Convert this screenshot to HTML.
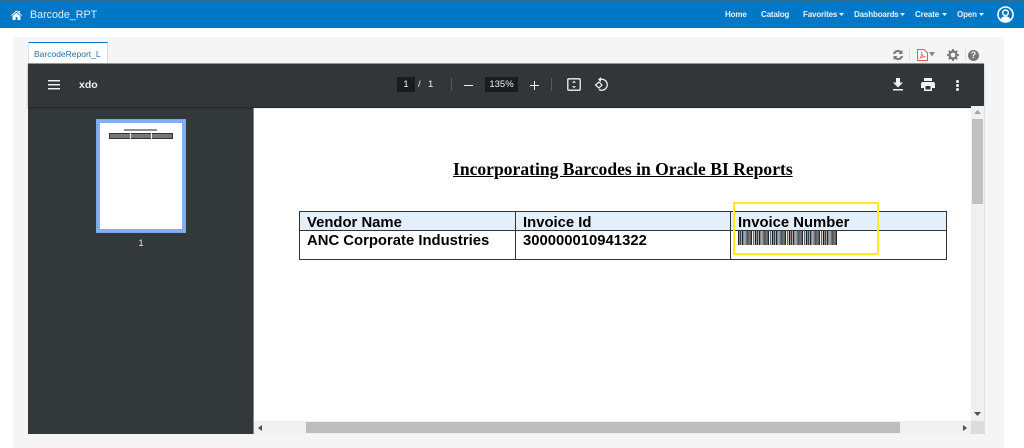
<!DOCTYPE html>
<html><head><meta charset="utf-8"><title>Barcode_RPT</title>
<style>
html,body{margin:0;padding:0;width:1024px;height:448px;overflow:hidden;background:#fff;font-family:"Liberation Sans",sans-serif}
div,span,svg{position:absolute;box-sizing:border-box}
span{white-space:nowrap}
.nav{top:9px;font-size:8px;font-weight:bold;color:#e8f3fb;line-height:11px;letter-spacing:-.15px}
.b{font-weight:bold;color:#000;font-size:14.85px;line-height:18px}
</style></head><body>
<div style="left:0;top:0;width:1024px;height:28px;background:#0078c6;border-top:1px solid #2f6a94"></div>
<svg style="left:11px;top:10px" width="11" height="10" viewBox="0 0 11 10"><path d="M5.5 0.5L0 5.2l.6.7L5.5 1.8l4.9 4.1.6-.7L8.8 3.4V1H7.400v1.200zM1.600 6v4h3V7h1.800v3h3V6L5.500 2.800z" fill="#fff"/></svg>
<span style="left:30px;top:8px;font-size:10.7px;line-height:14px;color:#dcecf8">Barcode_RPT</span>
<span class="nav" style="left:725px">Home</span>
<span class="nav" style="left:761px">Catalog</span>
<span class="nav" style="left:803px">Favorites</span>
<svg style="left:839px;top:13px" width="5" height="3"><path d="M0 0h5L2.500 3z" fill="#e8f3fb"/></svg>
<span class="nav" style="left:854px">Dashboards</span>
<svg style="left:900px;top:13px" width="5" height="3"><path d="M0 0h5L2.500 3z" fill="#e8f3fb"/></svg>
<span class="nav" style="left:915px">Create</span>
<svg style="left:942px;top:13px" width="5" height="3"><path d="M0 0h5L2.500 3z" fill="#e8f3fb"/></svg>
<span class="nav" style="left:957px">Open</span>
<svg style="left:979px;top:13px" width="5" height="3"><path d="M0 0h5L2.500 3z" fill="#e8f3fb"/></svg>
<svg style="left:997px;top:6px" width="17" height="17" viewBox="0 0 17 17"><circle cx="8.500" cy="8.500" r="7.500" fill="#0078c6" stroke="#fff" stroke-width="1.600"/><circle cx="8.500" cy="6.800" r="2.800" fill="none" stroke="#fff" stroke-width="1.500"/><path d="M3.500 13.500c1-2.500 3-3.300 5-3.300s4 .8 5 3.300c-1.500 1.600-3 2.200-5 2.200s-3.500-.6-5-2.200z" fill="#fff"/></svg>

<div style="left:13px;top:37px;width:991px;height:411px;background:#f5f5f5"></div>
<div style="left:28px;top:42px;width:80px;height:22px;background:#fff;border-top:1px solid #0078c6;border-left:1px solid #e0e0e0;border-right:1px solid #ddd"></div>
<span style="left:34px;top:49px;font-size:8.500px;line-height:11px;color:#2a6ea6">BarcodeReport_L</span>

<svg style="left:892px;top:49px" width="12" height="12" viewBox="0 0 12 12"><path d="M2 5a4 4 0 0 1 7-1.500M10 7a4 4 0 0 1-7 1.500" fill="none" stroke="#7c7c7c" stroke-width="2.200"/><path d="M10.500 1v4h-4zM1.500 11V7h4z" fill="#7c7c7c"/></svg>
<div style="left:909px;top:48px;width:1px;height:13px;background:#e2e2e2"></div>
<svg style="left:917px;top:49px" width="11" height="12" viewBox="0 0 11 12"><path d="M.5.500h6.500l3.500 3.500v7.500h-10z" fill="#fff" stroke="#ee5a52"/><path d="M2.500 9.500c2-2 2.500-4 2-6.500 0 3 1.500 4.500 4 5-3-.3-4.500 0-6 1.500z" fill="none" stroke="#ee5a52" stroke-width=".8"/></svg>
<svg style="left:929px;top:52px" width="6" height="5"><path d="M0 0h6L3 4.500z" fill="#888"/></svg>
<svg style="left:947px;top:49px" width="12" height="12" viewBox="0 0 12 12"><circle cx="6" cy="6" r="3.500" fill="none" stroke="#777" stroke-width="2.200"/><path d="M6 0v2.500M6 9.500V12M0 6h2.500M9.500 6H12M1.800 1.800l1.800 1.800M8.400 8.400l1.800 1.800M1.800 10.200l1.800-1.800M8.400 3.600l1.800-1.800" stroke="#777" stroke-width="1.800"/></svg>
<div style="left:965px;top:48px;width:1px;height:13px;background:#e2e2e2"></div>
<div style="left:968px;top:50px;width:11px;height:11px;border-radius:50%;background:#777"></div>
<span style="left:968px;top:50px;width:11px;text-align:center;font-size:9px;line-height:11px;font-weight:bold;color:#eee">?</span>

<div style="left:28px;top:63px;width:956px;height:371px;background:#33383b;border-top:1px solid #999"></div>
<div style="left:28px;top:64px;width:956px;height:43px;background:#323639;box-shadow:0 1px 2px rgba(0,0,0,.4)"></div>
<div style="left:48px;top:80px;width:12px;height:1px;background:#f1f1f1;box-shadow:0 1px 0 #8a8c8e"></div>
<div style="left:48px;top:84px;width:12px;height:1px;background:#f1f1f1;box-shadow:0 1px 0 #8a8c8e"></div>
<div style="left:48px;top:88px;width:12px;height:1px;background:#f1f1f1;box-shadow:0 1px 0 #8a8c8e"></div>
<span style="left:79px;top:79px;font-size:10.500px;line-height:13px;font-weight:bold;color:#f1f1f1">xdo</span>

<div style="left:397px;top:77px;width:18px;height:15px;background:#191b1c"></div>
<span style="left:397px;top:79px;width:18px;text-align:center;font-size:9.500px;line-height:12px;color:#f1f1f1">1</span>
<span style="left:418px;top:79px;font-size:9.500px;line-height:12px;color:#f1f1f1">/</span>
<span style="left:428px;top:79px;font-size:9.500px;line-height:12px;color:#f1f1f1">1</span>
<div style="left:451px;top:78px;width:1px;height:13px;background:#55595c"></div>
<div style="left:464px;top:85px;width:9px;height:1px;background:#f1f1f1"></div>
<div style="left:485px;top:77px;width:33px;height:15px;background:#191b1c"></div>
<span style="left:485px;top:79px;width:33px;text-align:center;font-size:9.500px;line-height:12px;color:#f1f1f1">135%</span>
<div style="left:530px;top:85px;width:9px;height:1px;background:#f1f1f1"></div>
<div style="left:534px;top:81px;width:1px;height:9px;background:#f1f1f1"></div>
<div style="left:551px;top:78px;width:1px;height:13px;background:#55595c"></div>
<svg style="left:567px;top:78px" width="14" height="13" viewBox="0 0 14 13"><rect x=".8" y=".8" width="12.400" height="11.400" rx="1" fill="none" stroke="#f1f1f1" stroke-width="1.300"/><path d="M7 2.800l-2 2h4zM7 10.200l-2-2h4z" fill="#f1f1f1"/></svg>
<svg style="left:594px;top:77px" width="15" height="15" viewBox="0 0 15 15"><path d="M6 2.500a5.500 5.500 0 1 1-1 10" fill="none" stroke="#f1f1f1" stroke-width="1.300"/><path d="M7 0v5L4 2.500z" fill="#f1f1f1"/><path d="M5 5l3 3-3 3-3.500-3z" fill="none" stroke="#f1f1f1" stroke-width="1.200"/></svg>

<svg style="left:892px;top:78px" width="12" height="13" viewBox="0 0 12 13"><path d="M4 0h4v4.500h3L6 9.500 1 4.500h3zM1 11h10v1.500H1z" fill="#f1f1f1"/></svg>
<svg style="left:921px;top:78px" width="14" height="13" viewBox="0 0 14 13"><path d="M3 0h8v3H3zM2 4h10a2 2 0 0 1 2 2v4h-3v3H3v-3H0V6a2 2 0 0 1 2-2z" fill="#f1f1f1"/><rect x="4.500" y="8" width="5" height="3.500" fill="#323639"/></svg>
<div style="left:956px;top:80px;width:3px;height:3px;border-radius:50%;background:#f1f1f1"></div>
<div style="left:956px;top:84px;width:3px;height:3px;border-radius:50%;background:#f1f1f1"></div>
<div style="left:956px;top:88px;width:3px;height:3px;border-radius:50%;background:#f1f1f1"></div>

<div style="left:96px;top:119px;width:90px;height:114px;background:#84aef2;border:1px solid #7ea7ea"></div>
<div style="left:100px;top:123px;width:82px;height:106px;background:#fff"></div>
<div style="left:124px;top:129px;width:33px;height:2px;background:#8d8d8d"></div>
<div style="left:109px;top:133px;width:64px;height:6px;background:#777;border:1px solid #333"></div>
<div style="left:130px;top:133px;width:1px;height:6px;background:#eee"></div>
<div style="left:151px;top:133px;width:1px;height:6px;background:#eee"></div>
<span style="left:136px;top:238px;width:10px;text-align:center;font-size:9px;line-height:11px;color:#e8e8e8">1</span>

<div style="left:253px;top:108px;width:731px;height:326px;background:#f0f0f0;border-left:1px solid #888"></div>
<div style="left:254px;top:109px;width:717px;height:312px;background:#fff"></div>

<span style="left:453px;top:159px;font-family:'Liberation Serif',serif;font-weight:bold;font-size:17.57px;line-height:21px;color:#000;text-decoration:underline">Incorporating Barcodes in Oracle BI Reports</span>

<div style="left:299px;top:211px;width:648px;height:49px;background:#fff;border:1px solid #333"></div>
<div style="left:300px;top:212px;width:646px;height:18px;background:#e3f0fb"></div>
<div style="left:300px;top:230px;width:646px;height:1px;background:#333"></div>
<div style="left:515px;top:212px;width:1px;height:47px;background:#333"></div>
<div style="left:730px;top:212px;width:1px;height:47px;background:#333"></div>
<span class="b" style="left:307px;top:214px">Vendor Name</span>
<span class="b" style="left:523px;top:214px">Invoice Id</span>
<span class="b" style="left:738px;top:214px">Invoice Number</span>
<span class="b" style="left:307px;top:232px">ANC Corporate Industries</span>
<span class="b" style="left:523px;top:232px">300000010941322</span>
<div style="left:738px;top:231px;width:99px;height:14px;background:repeating-linear-gradient(90deg,#1c1c1c 0 1px,#8a8f96 1px 2px,#3a3d42 2px 3px,#b9a68e 3px 4px,#24262a 4px 5.500px,#e9eef2 5.500px 6.500px,#4f6a86 6.500px 7.500px,#c5c8cb 7.500px 8.500px)"></div>
<div style="left:733px;top:202px;width:146px;height:53px;border:2px solid #fbee1c"></div>

<div style="left:971px;top:106px;width:13px;height:328px;background:#f0f0f0"></div>
<div style="left:972px;top:119px;width:11px;height:85px;background:#c1c1c1"></div>
<svg style="left:974px;top:110px" width="7" height="4"><path d="M0 4h7L3.500 0z" fill="#a3a3a3"/></svg>
<svg style="left:974px;top:412px" width="7" height="4"><path d="M0 0h7L3.500 4z" fill="#505050"/></svg>
<div style="left:971px;top:421px;width:13px;height:13px;background:#dcdcdc"></div>
<div style="left:254px;top:421px;width:717px;height:13px;background:#f0f0f0"></div>
<div style="left:306px;top:422px;width:594px;height:11px;background:#bdbdbd"></div>
<svg style="left:258px;top:425px" width="4" height="6"><path d="M4 0v6L0 3z" fill="#505050"/></svg>
<svg style="left:963px;top:425px" width="4" height="6"><path d="M0 0v6l4-3z" fill="#505050"/></svg>
<div style="left:984px;top:64px;width:1px;height:370px;background:#d8e2ef"></div>
</body></html>
